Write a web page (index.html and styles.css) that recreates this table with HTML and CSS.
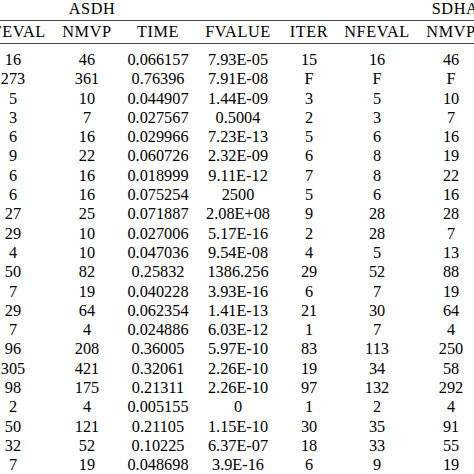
FILE: index.html
```html
<!DOCTYPE html>
<html>
<head>
<meta charset="utf-8">
<link rel="stylesheet" href="styles.css">
</head>
<body>
<table class="results">
<colgroup>
<col class="c-iter0"><col class="c-nfeval"><col class="c-nmvp"><col class="c-time"><col class="c-fvalue">
<col class="c-iter"><col class="c-nfeval2"><col class="c-nmvp2"><col class="c-time2"><col class="c-fvalue2">
</colgroup>
<thead>
<tr class="group">
<th colspan="5">ASDH</th>
<th colspan="5">SDHA</th>
</tr>
<tr class="head">
<th>ITER</th><th>NFEVAL</th><th>NMVP</th><th>TIME</th><th>FVALUE</th>
<th>ITER</th><th>NFEVAL</th><th>NMVP</th><th>TIME</th><th>FVALUE</th>
</tr>
</thead>
<tbody>
<tr><td></td><td>16</td><td>46</td><td>0.066157</td><td>7.93E-05</td><td>15</td><td>16</td><td>46</td><td></td><td></td></tr>
<tr><td></td><td>273</td><td>361</td><td>0.76396</td><td>7.91E-08</td><td>F</td><td>F</td><td>F</td><td></td><td></td></tr>
<tr><td></td><td>5</td><td>10</td><td>0.044907</td><td>1.44E-09</td><td>3</td><td>5</td><td>10</td><td></td><td></td></tr>
<tr><td></td><td>3</td><td>7</td><td>0.027567</td><td>0.5004</td><td>2</td><td>3</td><td>7</td><td></td><td></td></tr>
<tr><td></td><td>6</td><td>16</td><td>0.029966</td><td>7.23E-13</td><td>5</td><td>6</td><td>16</td><td></td><td></td></tr>
<tr><td></td><td>9</td><td>22</td><td>0.060726</td><td>2.32E-09</td><td>6</td><td>8</td><td>19</td><td></td><td></td></tr>
<tr><td></td><td>6</td><td>16</td><td>0.018999</td><td>9.11E-12</td><td>7</td><td>8</td><td>22</td><td></td><td></td></tr>
<tr><td></td><td>6</td><td>16</td><td>0.075254</td><td>2500</td><td>5</td><td>6</td><td>16</td><td></td><td></td></tr>
<tr><td></td><td>27</td><td>25</td><td>0.071887</td><td>2.08E+08</td><td>9</td><td>28</td><td>28</td><td></td><td></td></tr>
<tr><td></td><td>29</td><td>10</td><td>0.027006</td><td>5.17E-16</td><td>2</td><td>28</td><td>7</td><td></td><td></td></tr>
<tr><td></td><td>4</td><td>10</td><td>0.047036</td><td>9.54E-08</td><td>4</td><td>5</td><td>13</td><td></td><td></td></tr>
<tr><td></td><td>50</td><td>82</td><td>0.25832</td><td>1386.256</td><td>29</td><td>52</td><td>88</td><td></td><td></td></tr>
<tr><td></td><td>7</td><td>19</td><td>0.040228</td><td>3.93E-16</td><td>6</td><td>7</td><td>19</td><td></td><td></td></tr>
<tr><td></td><td>29</td><td>64</td><td>0.062354</td><td>1.41E-13</td><td>21</td><td>30</td><td>64</td><td></td><td></td></tr>
<tr><td></td><td>7</td><td>4</td><td>0.024886</td><td>6.03E-12</td><td>1</td><td>7</td><td>4</td><td></td><td></td></tr>
<tr><td></td><td>96</td><td>208</td><td>0.36005</td><td>5.97E-10</td><td>83</td><td>113</td><td>250</td><td></td><td></td></tr>
<tr><td></td><td>305</td><td>421</td><td>0.32061</td><td>2.26E-10</td><td>19</td><td>34</td><td>58</td><td></td><td></td></tr>
<tr><td></td><td>98</td><td>175</td><td>0.21311</td><td>2.26E-10</td><td>97</td><td>132</td><td>292</td><td></td><td></td></tr>
<tr><td></td><td>2</td><td>4</td><td>0.005155</td><td>0</td><td>1</td><td>2</td><td>4</td><td></td><td></td></tr>
<tr><td></td><td>50</td><td>121</td><td>0.21105</td><td>1.15E-10</td><td>30</td><td>35</td><td>91</td><td></td><td></td></tr>
<tr><td></td><td>32</td><td>52</td><td>0.10225</td><td>6.37E-07</td><td>18</td><td>33</td><td>55</td><td></td><td></td></tr>
<tr><td></td><td>7</td><td>19</td><td>0.048698</td><td>3.9E-16</td><td>6</td><td>9</td><td>19</td><td></td><td></td></tr>
</tbody>
</table>
</body>
</html>
```
FILE: styles.css
```css
html, body {
  margin: 0;
  padding: 0;
  background: #fff;
  overflow: hidden;
  width: 474px;
  height: 474px;
}
.results {
  margin-left: -95.5px;
  border-collapse: collapse;
  table-layout: fixed;
  width: 726px;
  font-family: "Liberation Serif", "Times New Roman", serif;
  font-size: 16.3px;
  color: #000;
}
.c-iter0 { width: 67px; }
.c-nfeval { width: 83px; }
.c-nmvp { width: 65px; }
.c-time { width: 77px; }
.c-fvalue { width: 83px; }
.c-iter { width: 59px; }
.c-nfeval2 { width: 77px; }
.c-nmvp2 { width: 71px; }
.c-time2 { width: 72px; }
.c-fvalue2 { width: 72px; }
.results th, .results td {
  padding: 0;
  text-align: center;
  white-space: nowrap;
  font-weight: normal;
}
.results th {
  letter-spacing: 0.6px;
}
.group th {
  line-height: 16px;
  padding-top: 1px;
  padding-bottom: 3px;
  border-bottom: 1px solid #444;
}
.head th {
  line-height: 22px;
  border-bottom: 1px solid #444;
}
.results td {
  line-height: 19.3px;
}
.results tbody tr:first-child td {
  padding-top: 6px;
}
```
